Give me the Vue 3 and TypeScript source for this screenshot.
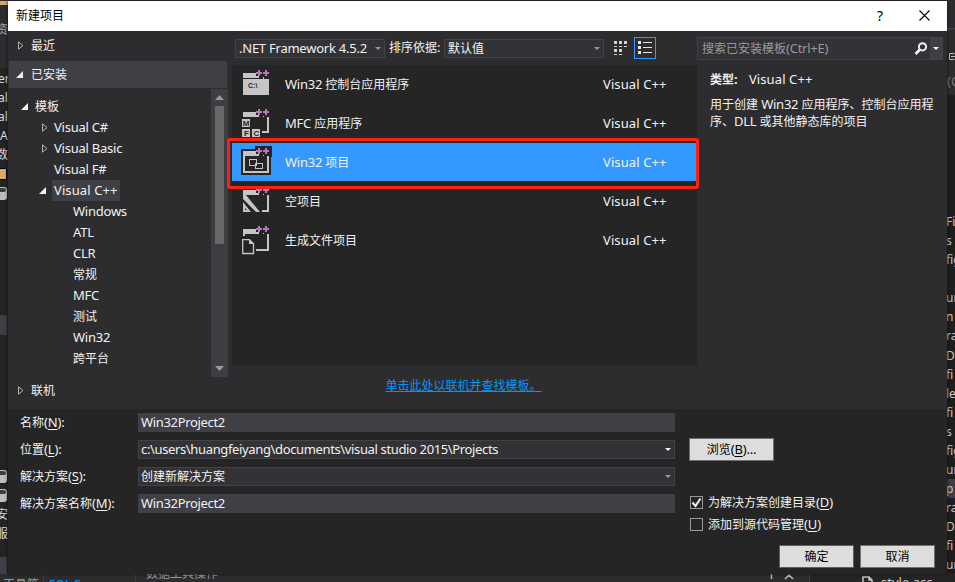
<script setup lang="ts">
import { h, ref } from 'vue'

interface TreeNode { label: string; level: number; state?: 'open' | 'closed'; selected?: boolean }
interface Template { name: string; icon: string }

/* Renders mixed text: Chinese runs get their own size, "_X" marks an access key. */
const Mixed = (props: { text: string }) =>
  (props.text.match(/[\u3000-\u9fff\uff00-\uffef]+|_[A-Z]|[^\u3000-\u9fff\uff00-\uffef_]+/g) ?? []).map((run) =>
    run[0] === '_'
      ? h('span', { class: 'access-key' }, run[1])
      : h('span', { class: run.charCodeAt(0) > 0x2fff ? 'run-cjk' : run.includes('++') ? 'run-plus' : 'run-latin' }, run),
  )
Mixed.props = ['text']

const tree: TreeNode[] = [
  { label: '模板', level: 0, state: 'open' },
  { label: 'Visual C#', level: 1, state: 'closed' },
  { label: 'Visual Basic', level: 1, state: 'closed' },
  { label: 'Visual F#', level: 1 },
  { label: 'Visual C++', level: 1, state: 'open', selected: true },
  { label: 'Windows', level: 2 },
  { label: 'ATL', level: 2 },
  { label: 'CLR', level: 2 },
  { label: '常规', level: 2 },
  { label: 'MFC', level: 2 },
  { label: '测试', level: 2 },
  { label: 'Win32', level: 2 },
  { label: '跨平台', level: 2 },
]

const templates: Template[] = [
  { name: 'Win32 控制台应用程序', icon: 'console' },
  { name: 'MFC 应用程序', icon: 'mfc' },
  { name: 'Win32 项目', icon: 'win32' },
  { name: '空项目', icon: 'empty' },
  { name: '生成文件项目', icon: 'makefile' },
]
const selected = ref(2)

const leftRows = ['er', 'al', 'al', 'IA', '数']
const rightRows = ['Fi', 's', 'fig', '', 'un', 'n', 'ra', 'Dl', 'fi', 'le', 'fi', 's', 'fig', 'un', 'p', 'ra', 'Dl', 'fi', 'un']
</script>

<template>
  <div class="desktop">
    <div class="behind-left">
      <div class="bl-top"></div>
      <div class="bl-search">资</div>
      <div class="bl-gap1"></div>
      <div v-for="(t, i) in leftRows" :key="i" class="bl-row" :class="{ shifted: i < 3 }">{{ t }}</div>
      <div class="bl-folder"></div>
      <svg class="bl-cyl" width="8" height="19"><path d="M0 3h4q3 0 3 3v7q0 3-3 3H0z" fill="#bdbdbd" /><path d="M0 4h3q3 0 3 2t-3 2H0z" fill="#3c3c3c" /></svg>
      <div class="bl-gap2"></div>
      <div class="bl-band"></div>
      <div class="bl-gap3"></div>
      <svg v-for="n in 2" :key="n" class="bl-cyl" width="8" height="19"><path d="M0 3h4q3 0 3 3v7q0 3-3 3H0z" fill="#bdbdbd" /><path d="M0 4h3q3 0 3 2t-3 2H0z" fill="#3c3c3c" /></svg>
      <div class="bl-row">安</div>
      <div class="bl-row">服</div>
      <div class="bl-gap4"></div>
      <div class="bl-band"></div>
    </div>
    <div class="behind-right">
      <div class="br-tools"><span>⋯</span><svg width="8" height="10"><path d="M7.500 2.500h-5v6h5M4 5.500h4" fill="none" stroke="#bbb" /></svg><span class="br-paren">(C</span></div>
      <div v-for="(t, i) in rightRows" :key="i" class="br-row" :class="{ lit: t === 'p' }">{{ t }}</div>
    </div>
    <div class="behind-top"></div>
    <div class="behind-bottom">
      <span class="bb-tab">工具箱</span>
      <span class="bb-tab blue">SQL S</span>
      <span class="bb-main">数据工具操作</span>
      <svg class="bb-pin" width="30" height="8"><path d="M3.500 0v5M17 5l4-4 4 4" fill="none" stroke="#bbb" stroke-width="1.500" /></svg>
      <span class="bb-file"><svg width="11" height="10"><path d="M1 10V1h6l3 3v6M7 1v3h3" fill="none" stroke="#c5c5c5" stroke-width="1.500" /></svg>style.acc</span>
    </div>

    <main class="dialog">
      <header class="titlebar">
        <h1>新建项目</h1>
        <button class="tb-help">?</button>
        <button class="tb-close"><svg width="11" height="11"><path d="M.5.5l10 10M10.500.5l-10 10" stroke="#000" stroke-width="1.100" /></svg></button>
      </header>

      <section class="upper">
        <nav class="side">
          <div class="group recent"><svg class="arrow" width="6" height="9"><path d="M.5.8v7.400L5 4.500z" /></svg><Mixed text="最近" /></div>
          <div class="group installed"><svg class="arrow open" width="7" height="7"><path d="M7 0v7H0z" /></svg><Mixed text="已安装" /></div>
          <div class="tree">
            <ul>
              <li v-for="node in tree" :key="node.label" :class="['lvl' + node.level, { selected: node.selected }]">
                <span class="twist">
                  <svg v-if="node.state === 'open'" class="arrow open" width="7" height="7"><path d="M7 0v7H0z" /></svg>
                  <svg v-else-if="node.state === 'closed'" class="arrow" width="6" height="9"><path d="M.5.8v7.400L5 4.500z" /></svg>
                </span>
                <span class="node-label"><Mixed :text="node.label" /></span>
              </li>
            </ul>
            <div class="scrollbar">
              <svg width="9" height="5"><path d="M0 5L4.500 0 9 5z" fill="#999" /></svg>
              <div class="thumb"></div>
              <svg class="down" width="9" height="5"><path d="M0 0h9L4.500 5z" fill="#999" /></svg>
            </div>
          </div>
          <div class="group online"><svg class="arrow" width="6" height="9"><path d="M.5.8v7.400L5 4.500z" /></svg><Mixed text="联机" /></div>
        </nav>

        <section class="center">
          <div class="toolbar">
            <div class="combo fw"><span><Mixed text=".NET Framework 4.5.2" /></span><svg width="6" height="3"><path d="M0 0h6L3 3z" fill="#999" /></svg></div>
            <span class="sort-label"><Mixed text="排序依据:" /></span>
            <div class="combo sort"><span><Mixed text="默认值" /></span><svg width="6" height="3"><path d="M0 0h6L3 3z" fill="#999" /></svg></div>
            <svg class="small-icons" width="13" height="14" shape-rendering="crispEdges" fill="#d0d0d0">
              <path d="M0 0h3v3H0zM5 0h3v3H5zM10 0h3v3h-3zM0 8h3v3H0zM5 8h3v3H5zM0 5h3v1H0zM5 5h3v1H5zM10 5h3v1h-3zM0 13h3v1H0zM5 13h3v1H5z" />
            </svg>
            <button class="view-btn"><svg width="14" height="14" shape-rendering="crispEdges" fill="#e6e6e6"><path d="M0 0h3v3H0zM0 5h3v3H0zM0 10h3v3H0zM5 1h9v1H5zM5 6h9v1H5zM5 11h9v1H5z" /></svg></button>
          </div>

          <div class="list">
            <div v-for="(t, i) in templates" :key="t.icon" class="item" :class="{ active: i === selected }" @click="selected = i">
              <svg class="tpl-icon" width="32" height="39" shape-rendering="crispEdges">
                <path v-if="t.icon === 'win32'" d="M0 6h14V3h17v11h-1v18H0z" fill="#252526" />
                <path d="M2 8h13v3h3v2H2z" fill="#c5c5c5" />
                <path d="M15 7h2V5h2v2h2v2h-2v2h-2V9h-2zM22 7h2V5h2v2h2v2h-2v2h-2V9h-2z" fill="#b878b8" />
                <template v-if="t.icon === 'console'">
                  <path d="M2 14h26v16H2zM22 12h1v2h-1z" fill="#c5c5c5" />
                  <text x="7" y="22.500" class="glyph console-glyph">C:\</text>
                </template>
                <template v-else-if="t.icon === 'mfc'">
                  <path d="M1 15h8v8H1zM1 25h8v8H1zM11 25h8v8h-8zM26 13h2v16h-7v-2h5zM22 12h1v1h-1z" fill="#c5c5c5" />
                  <text x="1.800" y="22" class="glyph">M</text>
                  <text x="3" y="32" class="glyph">F</text>
                  <text x="12.500" y="32" class="glyph">C</text>
                </template>
                <template v-else-if="t.icon === 'win32'">
                  <path d="M2 13h2v15h22V13h2v17H2zM22 12h1v1h-1z" fill="#c5c5c5" />
                  <path d="M8.500 16.500h7v6h-7zM14.500 20.500h7v5h-7z" fill="#252526" stroke="#c5c5c5" stroke-width="1.300" />
                </template>
                <template v-else-if="t.icon === 'empty'">
                  <path d="M26 13h2v17h-7v-2h5zM22 12h1v1h-1z" fill="#c5c5c5" />
                  <path d="M2 13h3l14 17h-4L2 17z" fill="#c5c5c5" shape-rendering="auto" />
                  <path d="M2 20l8 10H2zM4 26v2h2z" fill="#c5c5c5" fill-rule="evenodd" shape-rendering="auto" />
                </template>
                <template v-else>
                  <path d="M2 13h2v2H2zM26 13h2v17H15v-2h11zM22 12h1v1h-1z" fill="#c5c5c5" />
                  <path d="M1.700 18.700h6.800l4 4V32.500H1.700z" fill="#252526" stroke="#c5c5c5" stroke-width="1.300" shape-rendering="auto" />
                  <path d="M8 18l5 5H8z" fill="#c5c5c5" shape-rendering="auto" />
                </template>
              </svg>
              <span class="tpl-name"><Mixed :text="t.name" /></span>
              <span class="tpl-lang"><Mixed text="Visual C++" /></span>
            </div>
            <div class="highlight"></div>
          </div>
          <div class="link-row"><a><Mixed text="单击此处以联机并查找模板。" /></a></div>
        </section>

        <aside class="info">
          <div class="search">
            <span class="placeholder"><Mixed text="搜索已安装模板(Ctrl+E)" /></span>
            <svg width="14" height="13"><circle cx="8.500" cy="4.800" r="3.600" fill="none" stroke="#f1f1f1" stroke-width="2" /><path d="M6 7.500L1.500 12" stroke="#f1f1f1" stroke-width="2.800" /></svg>
            <span class="search-drop"><svg width="6" height="3"><path d="M0 0h6L3 3z" fill="#f1f1f1" /></svg></span>
          </div>
          <p class="kind"><b><Mixed text="类型:" /></b><Mixed text="Visual C++" /></p>
          <p class="desc"><Mixed text="用于创建 Win32 应用程序、控制台应用程" /><br /><Mixed text="序、DLL 或其他静态库的项目" /></p>
        </aside>
      </section>

      <section class="lower">
        <div class="form">
          <label><Mixed text="名称(_N):" /></label>
          <div class="field"><Mixed text="Win32Project2" /></div>
          <label><Mixed text="位置(_L):" /></label>
          <div class="combo"><span class="path"><Mixed text="c:\users\huangfeiyang\documents\visual studio 2015\Projects" /></span><svg width="6" height="3"><path d="M0 0h6L3 3z" fill="#f1f1f1" /></svg></div>
          <label><Mixed text="解决方案(_S):" /></label>
          <div class="combo"><span><Mixed text="创建新解决方案" /></span><svg width="6" height="3"><path d="M0 0h6L3 3z" fill="#999" /></svg></div>
          <label><Mixed text="解决方案名称(_M):" /></label>
          <div class="field"><Mixed text="Win32Project2" /></div>
        </div>
        <div class="actions">
          <button class="btn browse"><Mixed text="浏览(_B)..." /></button>
          <div class="check first"><span class="box"><svg width="11" height="11"><path d="M1.500 5.500l3 3.500 5-7.500" fill="none" stroke="#f1f1f1" stroke-width="2" /></svg></span><Mixed text="为解决方案创建目录(_D)" /></div>
          <div class="check"><span class="box"></span><Mixed text="添加到源代码管理(_U)" /></div>
          <div class="buttons">
            <button class="btn primary"><Mixed text="确定" /></button>
            <button class="btn"><Mixed text="取消" /></button>
          </div>
        </div>
      </section>
    </main>
  </div>
</template>

<style>
body { margin: 0; overflow: hidden; }
.run-cjk { font-size: 12px; }
.run-latin { letter-spacing: -0.24px; }
.run-plus { letter-spacing: 0.1px; }
.access-key { text-decoration: underline; text-underline-offset: 2px; }
</style>

<style scoped>
* { box-sizing: border-box; }
.desktop { position: relative; width: 955px; height: 582px; overflow: hidden; background: #232323; color: #f1f1f1; font: 13px/19px "Noto Sans", "Noto Sans CJK SC", sans-serif; white-space: nowrap; }
button { font: inherit; padding: 0; border: 0; background: none; }
svg { display: block; flex: none; }

/* Surroundings that show around the dialog */
.behind-left { position: absolute; left: 0; top: 0; width: 8px; height: 582px; overflow: hidden; }
.bl-top { height: 5px; background: #d9a766; }
.bl-search { height: 63px; padding-top: 15px; margin-left: -4px; font-size: 12px; color: #aaa; background: #2d2d30; }
.bl-gap1 { height: 1px; }
.bl-row { height: 19px; margin-left: -4px; color: #ddd; font-size: 12px; }
.bl-row.shifted { margin-left: -2px; }
.bl-folder { height: 12px; margin: 4px 0 4px; width: 7px; background: #d9a766; border: 1px solid #000; border-left: 0; }
.bl-gap2 { height: 112px; }
.bl-band { height: 20px; background: #3f3f46; width: 7px; }
.bl-gap3 { height: 132px; }
.bl-gap4 { height: 14px; }
.behind-right { position: absolute; left: 947px; top: 0; width: 8px; height: 582px; overflow: hidden; background: #1e1e1e; }
.br-tools { height: 212px; padding-top: 20px; background: linear-gradient(#2d2d30 95px, #1e1e1e 95px); color: #777; font-size: 10px; display: flex; flex-direction: column; }
.br-tools svg { margin-top: 12px; }
.br-paren { margin-top: 11px; font-size: 13px; }
.br-row { height: 19.080px; margin-left: -1px; color: #c8c8c8; font-size: 12px; }
.br-row.lit { background: #3f3f46; }
.behind-top { position: absolute; left: 0; top: 0; width: 955px; height: 1px; background: #2d2d30; }
.behind-bottom { position: absolute; left: 0; top: 574px; width: 955px; height: 8px; overflow: hidden; display: flex; background: #2d2d30; font-size: 12px; line-height: 16px; color: #999; }
.bb-tab { width: 44px; padding: 3px 0 0 3px; border-right: 1px solid #3f3f46; }
.bb-tab.blue { width: 92px; padding-left: 5px; color: #0097fb; }
.bb-main { margin-left: 10px; margin-top: -8px; width: 622px; }
.bb-pin { margin-top: 0; }
.bb-file { display: flex; gap: 8px; margin-left: 11px; padding: 2px 0 0 52px; width: 146px; background: #252526; border-left: 1px solid #3f3f46; font-size: 13px; line-height: 12px; color: #c8c8c8; }

/* Dialog window */
.dialog { position: absolute; left: 8px; top: 1px; width: 939px; height: 573px; background: #252526; box-shadow: 0 0 3px #111; }
.titlebar { height: 30px; background: #fff; color: #000; display: flex; align-items: center; padding-left: 8px; }
h1 { margin: 0 0 1px; font-size: 12px; font-weight: 400; flex: 1; }
.tb-help { width: 20px; margin: 0 29px 2px 0; font-size: 14px; }
.tb-close { width: 11px; margin: 0 17px 1px 0; }
.upper { height: 378px; background: #2d2d30; display: grid; grid-template-columns: 224px 465px 250px; }

/* Category tree */
.side { display: flex; flex-direction: column; padding-left: 1px; }
.group { display: flex; align-items: center; padding-left: 9px; }
.group .arrow { margin-right: 7px; }
.arrow { fill: none; stroke: #b5b5b5; stroke-width: 1; }
.arrow.open { fill: #f1f1f1; stroke: none; }
.recent { height: 30px; padding-bottom: 1px; }
.installed { width: 218px; height: 27px; background: #3f3f46; padding-left: 7px; }
.installed .arrow { margin-right: 8px; }
.tree { display: flex; width: 219px; height: 288px; margin-top: 1px; }
.tree ul { list-style: none; margin: 0; padding: 7px 0 0; width: 202px; }
.tree li { height: 21px; display: flex; align-items: center; }
.twist { width: 16px; display: flex; }
.lvl0 { padding-left: 12px; }
.lvl0 .twist { width: 14px; }
.lvl1 { padding-left: 33px; }
.lvl1 .twist { width: 10px; }
.lvl1 .arrow.open { margin-left: -3px; }
.lvl2 { padding-left: 46px; }
.lvl2 .twist { width: 16px; }
.node-label { padding: 0 2px; height: 21px; line-height: 20px; }
.lvl0 .node-label { padding: 0; }
.selected .node-label { background: #3f3f46; }
.scrollbar { width: 17px; background: #3e3e42; display: flex; flex-direction: column; align-items: center; padding: 6px 0; }
.thumb { width: 9px; height: 138px; margin-top: 6px; background: #686868; }
.scrollbar .down { margin-top: auto; }
.online { height: 26px; }

/* Template list */
.center { display: flex; flex-direction: column; }
.toolbar { height: 34px; display: flex; align-items: flex-start; padding: 6px 0 0 3px; }
.combo { height: 19px; border: 1px solid #434346; background: #333337; display: flex; align-items: center; justify-content: space-between; padding: 0 3px 0 2px; line-height: 17px; }
.fw { width: 150px; margin-top: 2px; padding-left: 3px; }
.sort { width: 160px; margin-top: 2px; padding-left: 3px; }
.sort-label { width: 55px; margin: 1px 0 0 4px; }
.small-icons { margin: 4px 7px 0 10px; }
.view-btn { width: 22px; height: 22px; border: 1px solid #3399ff; padding: 3px; display: flex; }
.list { position: relative; height: 300px; background: #252526; }
.item { height: 39px; display: flex; align-items: center; padding-left: 9px; }
.item.active { background: linear-gradient(#3399ff, #3399ff) 0 0 / 100% 38px no-repeat; }
.tpl-name { margin-left: 12px; width: 318px; }
.highlight { position: absolute; left: -5px; top: 73px; width: 472px; height: 51px; border: 3px solid #ff2010; border-radius: 3px; z-index: 1; pointer-events: none; }
.glyph { font: bold 8px "Liberation Sans", sans-serif; fill: #252526; }
.console-glyph { font-size: 7px; }
.link-row { height: 40px; display: flex; align-items: center; justify-content: center; padding-right: 2px; }
.link-row a { color: #0097fb; text-decoration: underline; }

/* Details pane */
.info { padding: 6px 4px 0 0; }
.search { height: 23px; width: 246px; border: 1px solid #434346; background: #333337; display: flex; align-items: center; padding-left: 4px; }
.placeholder { flex: 1; color: #999; }
.search-drop { width: 12px; margin-left: 2px; height: 21px; background: #3f3f46; display: flex; align-items: center; justify-content: center; }
.kind { margin: 10px 0 0 13px; }
.kind b { margin-right: 11.500px; }
.desc { margin: 7px 0 0 13px; line-height: 17px; }

/* Project form */
.lower { height: 165px; display: flex; }
.form { display: grid; grid-template-columns: 118px 537px; grid-auto-rows: 19px; row-gap: 8px; padding: 4px 0 0 12px; }
.field { background: #3f3f46; padding-left: 3px; }
.path .run-latin, .path :deep(.run-latin) { letter-spacing: -0.36px; }
.field :deep(.run-latin) { letter-spacing: -0.33px; }
.actions { padding: 29px 0 0 14px; display: flex; flex-direction: column; width: 272px; }
.btn { height: 23px; width: 75px; background: #ddd; border: 1px solid #707070; color: #000; line-height: 19px; }
.browse { width: 85px; }
.btn.primary { border-color: #0078d7; }
.check { display: flex; align-items: center; height: 22px; padding-left: 1px; }
.first { margin-top: 30px; }
.box { width: 13px; height: 13px; border: 1px solid #999; margin-right: 5px; }
.buttons { display: flex; gap: 6px; padding-left: 90px; margin-top: 10px; }
</style>
